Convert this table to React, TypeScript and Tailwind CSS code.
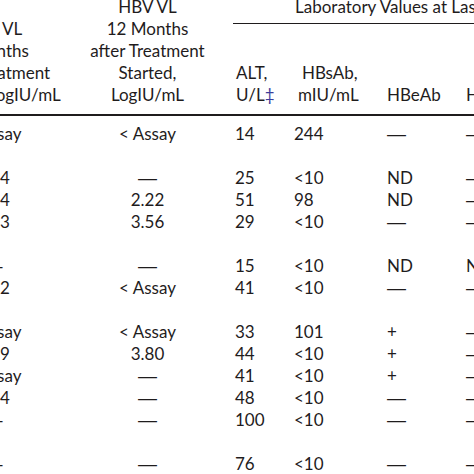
import React from "react";

type Row = [string, string, string, string, string, string] | null;

const rows: Row[] = [
  ["< Assay", "< Assay", "14", "244", "—", "—"],
  null,
  ["5.24", "—", "25", "<10", "ND", "—"],
  ["6.44", "2.22", "51", "98", "ND", "—"],
  ["4.13", "3.56", "29", "<10", "—", "—"],
  null,
  ["—", "—", "15", "<10", "ND", "ND"],
  ["3.72", "< Assay", "41", "<10", "—", "—"],
  null,
  ["< Assay", "< Assay", "33", "101", "+", "—"],
  ["4.09", "3.80", "44", "<10", "+", "—"],
  ["< Assay", "—", "41", "<10", "+", "—"],
  ["5.14", "—", "48", "<10", "—", "—"],
  ["—", "—", "100", "<10", "—", "—"],
  null,
  ["—", "—", "76", "<10", "—", "—"],
];

const grid = "grid grid-cols-[140px_169px_62px_93px_79px_80px]";

function Cell({ v }: { v: string }) {
  if (v === "—") {
    return (
      <span
        className="text-[19px] leading-[22px]"
        style={{ fontFamily: "'Liberation Sans', Arial, sans-serif" }}
      >
        —
      </span>
    );
  }
  return <>{v}</>;
}

export default function App() {
  return (
    <div
      className="w-[474px] h-[474px] overflow-hidden bg-white text-[#1f1c1d] text-[17px] leading-[22px]"
      style={{ fontFamily: "Lato, 'Open Sans', sans-serif" }}
    >
      <div className="ml-[-77px] mt-[-4px] w-[551px]">
        {/* Header */}
        <div className={`${grid} pb-[8px] border-b-2 border-[#1f1c1d]`}>
          <div className="flex flex-col justify-end items-center text-center whitespace-nowrap">
            <div>HBV VL</div>
            <div>6 Months</div>
            <div>after Treatment</div>
            <div>Started, LogIU/mL</div>
          </div>
          <div className="flex flex-col justify-end items-center text-center whitespace-nowrap">
            <div>HBV VL</div>
            <div>12 Months</div>
            <div>after Treatment</div>
            <div>Started,</div>
            <div>LogIU/mL</div>
          </div>
          <div className="col-span-4 flex flex-col">
            <div className="pl-[63px] whitespace-nowrap overflow-hidden">
              Laboratory Values at Last Follow-up
            </div>
            <div className="mt-[5px] ml-[1px] border-t border-[#1f1c1d]" />
            <div className="grid grid-cols-[62px_93px_79px_80px] mt-auto pt-[38px]">
              <div className="pl-[4px]">
                <div>ALT,</div>
                <div>
                  U/L<span className="text-[#3b3b9a]">‡</span>
                </div>
              </div>
              <div className="pl-[4px]">
                <div className="pl-[4px]">HBsAb,</div>
                <div>mIU/mL</div>
              </div>
              <div className="flex flex-col justify-end">
                <div>HBeAb</div>
              </div>
              <div className="flex flex-col justify-end whitespace-nowrap">
                <div>HBeAg</div>
              </div>
            </div>
          </div>
        </div>
        {/* Body */}
        <div className="pt-[7px]">
          {rows.map((r, i) =>
            r === null ? (
              <div key={i} className="h-[22px]" />
            ) : (
              <div key={i} className={`${grid} h-[22px] whitespace-nowrap`}>
                <div className="text-center"><Cell v={r[0]} /></div>
                <div className="text-center"><Cell v={r[1]} /></div>
                <div className="pl-[3px]"><Cell v={r[2]} /></div>
                <div><Cell v={r[3]} /></div>
                <div><Cell v={r[4]} /></div>
                <div><Cell v={r[5]} /></div>
              </div>
            )
          )}
        </div>
      </div>
    </div>
  );
}
